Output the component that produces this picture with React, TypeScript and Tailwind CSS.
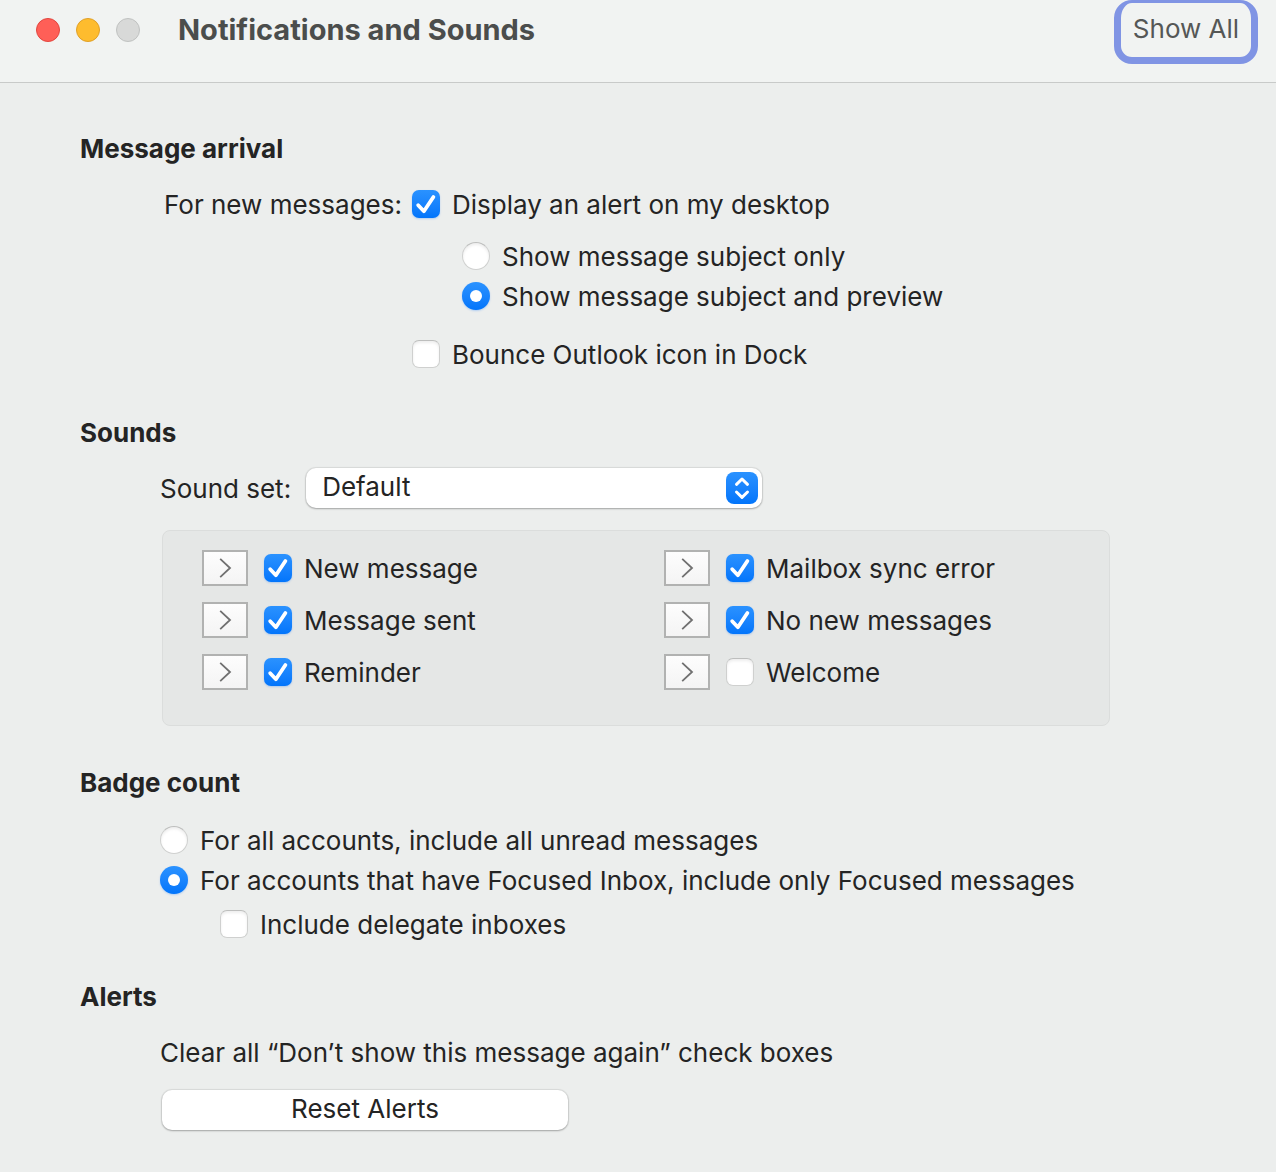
import React, { useState } from "react";

type TickProps = { label: string; initial?: boolean };

function Tick({ label, initial = false }: TickProps) {
  const [on, setOn] = useState(initial);
  return (
    <label className="flex h-10 items-center gap-3 whitespace-nowrap">
      <span className="relative grid size-7 shrink-0 place-items-center">
        <input
          type="checkbox"
          checked={on}
          onChange={(e) => setOn(e.target.checked)}
          className="peer size-7 appearance-none rounded-[7px] border border-[#cfd0cf] border-t-[#bdbebd] bg-white shadow-[inset_0_2px_3px_rgba(0,0,0,0.07)] checked:border-0 checked:bg-linear-to-b checked:from-[#2a92ff] checked:to-[#0275fb] checked:shadow-[0_1px_2px_rgba(0,110,255,0.25)]"
        />
        <svg
          viewBox="0 0 28 28"
          className="pointer-events-none absolute inset-0 hidden size-7 peer-checked:block"
          fill="none"
          stroke="white"
          strokeWidth="3.8"
          strokeLinecap="round"
          strokeLinejoin="round"
        >
          <path d="M6.2 15.2L11.9 21.2L21.4 7" />
        </svg>
      </span>
      <span className="pt-0.5">{label}</span>
    </label>
  );
}

function Choice({ label, name, initial = false }: TickProps & { name: string }) {
  return (
    <label className="flex h-10 items-center gap-3 whitespace-nowrap">
      <span className="relative grid size-7 shrink-0 place-items-center">
        <input
          type="radio"
          name={name}
          defaultChecked={initial}
          className="peer size-7 appearance-none rounded-full border border-[#cfd0cf] border-t-[#bdbebd] bg-white shadow-[inset_0_2px_3px_rgba(0,0,0,0.07)] checked:border-0 checked:bg-linear-to-b checked:from-[#2a92ff] checked:to-[#0275fb] checked:shadow-[0_1px_2px_rgba(0,110,255,0.25)]"
        />
        <span className="pointer-events-none absolute hidden size-3 rounded-full bg-white peer-checked:block" />
      </span>
      <span className="pt-0.5">{label}</span>
    </label>
  );
}

function SoundRow({ label, initial }: TickProps) {
  return (
    <div className="flex h-[52px] items-center gap-4">
      <button
        type="button"
        aria-label={"Play " + label}
        className="grid h-9 w-[46px] place-items-center border-2 border-[#b1b2b1] bg-linear-to-b from-[#fdfdfd] to-[#f4f4f4]"
      >
        <svg viewBox="0 0 14 22" className="h-[22px] w-3.5" fill="none" stroke="#707070" strokeWidth="1.8">
          <path d="M2.2 1.8L12 11L2.2 20.2" />
        </svg>
      </button>
      <Tick label={label} initial={initial} />
    </div>
  );
}

export default function App() {
  return (
    <div className="min-h-screen bg-[#eceeed] font-['Inter',sans-serif] text-[26px] leading-10 text-[#242424]">
      <header className="flex h-[83px] items-start justify-between border-b border-[#c8cac9] bg-[#f1f3f2] pr-[18px] pl-9">
        <div className="flex h-[60px] items-center">
          <div className="flex gap-4">
            <button type="button" aria-label="Close" className="size-6 rounded-full border border-[#e2463f] bg-[#ff5f57]" />
            <button type="button" aria-label="Minimize" className="size-6 rounded-full border border-[#e0a028] bg-[#febc2e]" />
            <button type="button" aria-label="Zoom" className="size-6 rounded-full border border-[#c0c2c1] bg-[#d8d9d8]" />
          </div>
          <h1 className="ml-[38px] text-[29px] font-bold text-[#4b4d4c]">Notifications and Sounds</h1>
        </div>
        <button type="button" className="h-16 w-36 rounded-[18px] border-[7px] border-t-[3px] border-[#8094e4] bg-[#f1f3f2] pb-0.5 text-[#555756]">
          Show All
        </button>
      </header>

      <main className="px-20 pt-[46px]">
        <section>
          <h2 className="font-bold">Message arrival</h2>
          <div className="mt-[15px] ml-[84px] flex gap-2.5">
            <span className="pt-px whitespace-nowrap">For new messages:</span>
            <div>
              <Tick label="Display an alert on my desktop" initial />
              <div className="mt-3 mb-[18px] ml-[50px]">
                <Choice name="preview" label="Show message subject only" />
                <Choice name="preview" label="Show message subject and preview" initial />
              </div>
              <Tick label="Bounce Outlook icon in Dock" />
            </div>
          </div>
        </section>

        <section className="mt-[39px]">
          <h2 className="font-bold">Sounds</h2>
          <div className="mt-3.5 ml-20 flex items-center gap-[15px]">
            <label htmlFor="sound-set" className="pt-0.5">Sound set:</label>
            <div className="relative">
              <select
                id="sound-set"
                className="block h-10 w-[456px] appearance-none rounded-[10px] bg-white px-4 pb-0.5 leading-9 shadow-[0_0_1px_1px_rgba(0,0,0,0.08),0_1px_2px_rgba(0,0,0,0.25)]"
              >
                <option>Default</option>
              </select>
              <span className="pointer-events-none absolute top-1 right-1 grid size-8 place-items-center rounded-lg bg-linear-to-b from-[#2a92ff] to-[#0275fb]">
                <svg viewBox="0 0 32 32" className="size-8" fill="none" stroke="white" strokeWidth="3" strokeLinecap="round" strokeLinejoin="round">
                  <path d="M10.5 12.3L16 7L21.5 12.3M10.5 20L16 25.3L21.5 20" />
                </svg>
              </span>
            </div>
          </div>
          <div className="mt-[21px] mr-[86px] ml-[82px] grid grid-cols-[462px_1fr] rounded-lg border border-[#dbdddc] bg-[#e5e7e6] pt-[11px] pb-[27px] pl-[39px]">
            <SoundRow label="New message" initial />
            <SoundRow label="Mailbox sync error" initial />
            <SoundRow label="Message sent" initial />
            <SoundRow label="No new messages" initial />
            <SoundRow label="Reminder" initial />
            <SoundRow label="Welcome" />
          </div>
        </section>

        <section className="mt-[37px]">
          <h2 className="font-bold">Badge count</h2>
          <div className="mt-[17px] ml-20">
            <Choice name="badge" label="For all accounts, include all unread messages" />
            <Choice name="badge" label="For accounts that have Focused Inbox, include only Focused messages" initial />
            <div className="mt-1 ml-[60px]">
              <Tick label="Include delegate inboxes" />
            </div>
          </div>
        </section>

        <section className="mt-[33px]">
          <h2 className="font-bold">Alerts</h2>
          <div className="mt-4 ml-20">
            <p className="whitespace-nowrap">Clear all “Don’t show this message again” check boxes</p>
            <button
              type="button"
              className="mt-[17px] ml-0.5 block h-10 w-[406px] rounded-[10px] bg-white pb-0.5 leading-9 shadow-[0_0_1px_1px_rgba(0,0,0,0.08),0_1px_2px_rgba(0,0,0,0.25)]"
            >
              Reset Alerts
            </button>
          </div>
        </section>
      </main>
    </div>
  );
}
